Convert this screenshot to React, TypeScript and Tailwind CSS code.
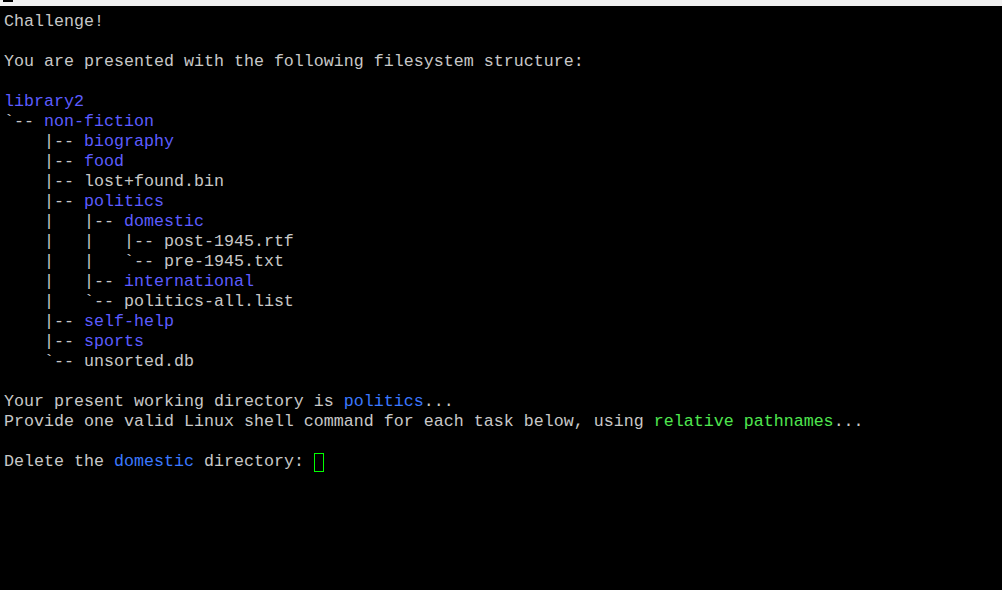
const B = ({ children }: { children: React.ReactNode }) => (
  <span className="text-[#5c5cff]">{children}</span>
);

export default function App() {
  return (
    <div className="flex h-[590px] w-[1002px] flex-col bg-black">
      {/* WINDOW STRIP */}
      <div className="relative h-[6px] w-full bg-[#f0f0f0]">
        <div className="absolute left-[3px] top-0 h-[2px] w-[10px] bg-black" />
      </div>

      {/* TERMINAL OUTPUT */}
      <pre className="whitespace-pre px-[4px] pt-[6px] font-['Liberation_Mono',monospace] text-[16.67px] leading-[20px] text-[#c8c8c8]">
        {"Challenge!\n\nYou are presented with the following filesystem structure:\n\n"}
        <B>library2</B>
        {"\n`-- "}
        <B>non-fiction</B>
        {"\n    |-- "}
        <B>biography</B>
        {"\n    |-- "}
        <B>food</B>
        {"\n    |-- lost+found.bin\n    |-- "}
        <B>politics</B>
        {"\n    |   |-- "}
        <B>domestic</B>
        {"\n    |   |   |-- post-1945.rtf\n    |   |   `-- pre-1945.txt\n    |   |-- "}
        <B>international</B>
        {"\n    |   `-- politics-all.list\n    |-- "}
        <B>self-help</B>
        {"\n    |-- "}
        <B>sports</B>
        {"\n    `-- unsorted.db\n\nYour present working directory is "}
        <span className="text-[#3b78ff]">politics</span>
        {"...\nProvide one valid Linux shell command for each task below, using "}
        <span className="text-[#4fe64f]">relative pathnames</span>
        {"...\n\nDelete the "}
        <span className="text-[#3b78ff]">domestic</span>
        {" directory: "}
        <span className="relative top-[1px] inline-block h-[19px] w-[10px] border-[1.5px] border-[#00ff00] align-top" />
      </pre>
    </div>
  );
}
